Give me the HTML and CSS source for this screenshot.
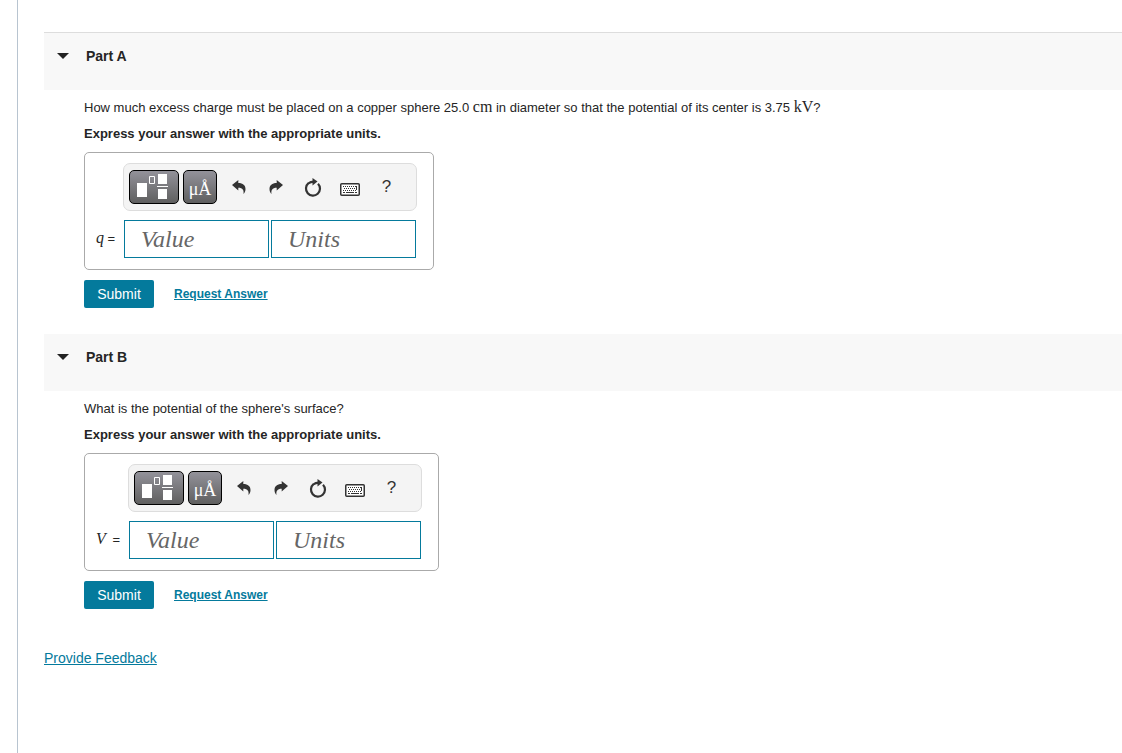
FILE: index.html
```html
<!DOCTYPE html>
<html lang="en">
<head>
<meta charset="utf-8">
<title>Problem</title>
<link rel="stylesheet" href="styles.css">
</head>
<body>
<svg class="defs" width="0" height="0" aria-hidden="true">
  <symbol id="template" viewBox="0 0 34 26">
    <path fill="#fff" d="M0 9h10v14H0zM21 0h9v10h-9zM21 15h9v10h-9zM20 12h11v1H20z"/>
    <path fill="none" stroke="#fff" d="M12.500 2.500h5v7h-5z"/>
  </symbol>
  <symbol id="undo" viewBox="0 0 14 14">
    <path fill="#333" d="M0 5 6.300 0v3C11 3 13.500 5.500 13.500 9c0 2-.7 3.600-2 5 .6-3.700-.8-6.200-5.200-6.200v2.700z"/>
  </symbol>
  <symbol id="redo" viewBox="0 0 14 14">
    <path fill="#333" d="M14 5 7.700 0v3C3 3 .5 5.500.5 9c0 2 .7 3.600 2 5-.6-3.700.8-6.200 5.200-6.200v2.700z"/>
  </symbol>
  <symbol id="reset" viewBox="0 0 18 19">
    <path fill="none" stroke="#333" stroke-width="2.200" d="M4.500 5.200A7 7 0 1 0 14 5.700M4.200 5.500C6 4 7.800 3.600 10 3.600"/>
    <path fill="#333" d="M8.500 0l5 3.600-5 4z"/>
  </symbol>
  <symbol id="keyboard" viewBox="0 0 20 13">
    <rect x=".75" y=".75" width="18.500" height="11.500" rx="1" fill="#fff" stroke="#333" stroke-width="1.500"/>
    <path fill="none" stroke="#333" stroke-dasharray="1 1" d="M3 3.500h14M4 5.500h13M3 7.500h14"/>
    <path stroke="#333" d="M3 9.500h2M6 9.500h8M15 9.500h2M16.500 3v4"/>
  </symbol>
</svg>
<main class="page">
  <section class="part">
    <header class="part-head part-head-first">
      <button class="toggle" type="button" aria-label="Collapse Part A"><svg width="12" height="6" viewBox="0 0 12 6"><path fill="#222" d="M0 0h12L6 6z"/></svg></button>
      <h2 class="part-title">Part A</h2>
    </header>
    <div class="part-body">
      <p class="question">How much excess charge must be placed on a copper sphere 25.0 <span class="math">cm</span> in diameter so that the potential of its center is 3.75 <span class="math">kV</span>?</p>
      <p class="question instruction">Express your answer with the appropriate units.</p>
      <div class="answer">
        <div class="label"><i class="variable">q</i><span>=</span></div>
        <div class="editor">
          <div class="toolbar">
            <button class="key key-wide" type="button" aria-label="Templates"><svg width="34" height="26"><use href="#template"/></svg></button>
            <button class="key" type="button">μÅ</button>
            <div class="tools">
              <button class="tool" type="button" aria-label="Undo"><svg width="14" height="14"><use href="#undo"/></svg></button>
              <button class="tool" type="button" aria-label="Redo"><svg width="14" height="14"><use href="#redo"/></svg></button>
              <button class="tool" type="button" aria-label="Reset"><svg width="18" height="19"><use href="#reset"/></svg></button>
              <button class="tool tool-keyboard" type="button" aria-label="Keyboard shortcuts"><svg width="20" height="13"><use href="#keyboard"/></svg></button>
              <button class="tool" type="button">?</button>
            </div>
          </div>
          <div class="fields">
            <input class="field" type="text" placeholder="Value" aria-label="q value">
            <input class="field" type="text" placeholder="Units" aria-label="q units">
          </div>
        </div>
      </div>
      <div class="actions">
        <button class="submit" type="button">Submit</button>
        <a class="request" href="#">Request Answer</a>
      </div>
    </div>
  </section>
  <section class="part">
    <header class="part-head">
      <button class="toggle" type="button" aria-label="Collapse Part B"><svg width="12" height="6" viewBox="0 0 12 6"><path fill="#222" d="M0 0h12L6 6z"/></svg></button>
      <h2 class="part-title">Part B</h2>
    </header>
    <div class="part-body">
      <p class="question">What is the potential of the sphere's surface?</p>
      <p class="question instruction">Express your answer with the appropriate units.</p>
      <div class="answer">
        <div class="label label-wide"><i class="variable">V</i><span>=</span></div>
        <div class="editor">
          <div class="toolbar">
            <button class="key key-wide" type="button" aria-label="Templates"><svg width="34" height="26"><use href="#template"/></svg></button>
            <button class="key" type="button">μÅ</button>
            <div class="tools">
              <button class="tool" type="button" aria-label="Undo"><svg width="14" height="14"><use href="#undo"/></svg></button>
              <button class="tool" type="button" aria-label="Redo"><svg width="14" height="14"><use href="#redo"/></svg></button>
              <button class="tool" type="button" aria-label="Reset"><svg width="18" height="19"><use href="#reset"/></svg></button>
              <button class="tool tool-keyboard" type="button" aria-label="Keyboard shortcuts"><svg width="20" height="13"><use href="#keyboard"/></svg></button>
              <button class="tool" type="button">?</button>
            </div>
          </div>
          <div class="fields">
            <input class="field" type="text" placeholder="Value" aria-label="V value">
            <input class="field" type="text" placeholder="Units" aria-label="V units">
          </div>
        </div>
      </div>
      <div class="actions">
        <button class="submit" type="button">Submit</button>
        <a class="request" href="#">Request Answer</a>
      </div>
    </div>
  </section>
  <footer class="footer"><a class="feedback" href="#">Provide Feedback</a></footer>
</main>
</body>
</html>
```
FILE: styles.css
```css
* { box-sizing: border-box; }
body {
  margin: 0;
  background: #fff;
  color: #252525;
  font: 13px/26px "Liberation Sans", Arial, sans-serif;
}
button, input { font: inherit; color: inherit; margin: 0; }
button { padding: 0; border: 0; background: none; cursor: pointer; }
svg { display: block; }
.defs { position: absolute; }
.page {
  min-height: 100vh;
  margin-left: 17px;
  padding: 32px 0 0 26px;
  border-left: 1px solid #b8c4d0;
}
.part-head {
  display: flex;
  align-items: flex-start;
  gap: 17px;
  padding: 13px 0 24px 13px;
  background: #f8f8f8;
}
.part-head-first { border-top: 1px solid #ddd; }
.toggle { display: flex; align-items: center; height: 20px; }
.part-title { margin: 0; font-size: 14px; line-height: 20px; }
.part-body { padding: 5px 0 26px 40px; }
.question { margin: 0; }
.instruction { font-weight: bold; }
.math { font: 16px/16px "Liberation Serif", serif; }
.answer {
  display: flex;
  align-items: flex-end;
  gap: 8px;
  width: fit-content;
  margin-top: 5px;
  padding: 10px 16px 11px 11px;
  border: 1px solid #aaa;
  border-radius: 5px;
}
.label {
  display: flex;
  align-items: baseline;
  justify-content: space-between;
  width: 19px;
  line-height: 38px;
}
.label-wide { width: 24px; }
.variable { font: italic 16px/38px "Liberation Serif", serif; }
.toolbar {
  display: flex;
  align-items: center;
  gap: 4px;
  height: 48px;
  padding: 0 10px 0 5px;
  border: 1px solid #ddd;
  border-radius: 7px;
  background: #f4f4f4;
}
.key {
  display: flex;
  align-items: center;
  justify-content: center;
  width: 34px;
  height: 34px;
  padding-top: 3px;
  border: 1px solid #000;
  border-radius: 5px;
  background: linear-gradient(#93929a, #5f5f5f);
  color: #fff;
  font: 18px/30px "Liberation Serif", serif;
}
.key-wide { width: 50px; padding-top: 0; }
.tools { display: flex; margin-left: -1px; }
.tool {
  display: flex;
  align-items: center;
  justify-content: center;
  width: 37px;
  height: 34px;
  color: #333;
  font-size: 17px;
}
.tool-keyboard { padding-top: 4px; }
.fields { display: flex; gap: 2px; padding: 9px 1px 0; }
.field {
  width: 145px;
  height: 38px;
  padding: 0 16px;
  border: 1px solid #047a9c;
  border-radius: 0;
  background: #fff;
  font: italic 24px/36px "Liberation Serif", serif;
}
.field::placeholder { color: #666; opacity: 1; }
.actions { display: flex; align-items: center; gap: 20px; margin-top: 10px; }
.submit {
  width: 70px;
  height: 28px;
  border-radius: 2px;
  background: #047a9c;
  color: #fff;
  font-size: 14px;
}
.request { color: #047a9c; font-size: 12px; font-weight: bold; }
.footer { padding-top: 10px; line-height: 26px; }
.feedback { color: #047a9c; font-size: 14px; }
```
